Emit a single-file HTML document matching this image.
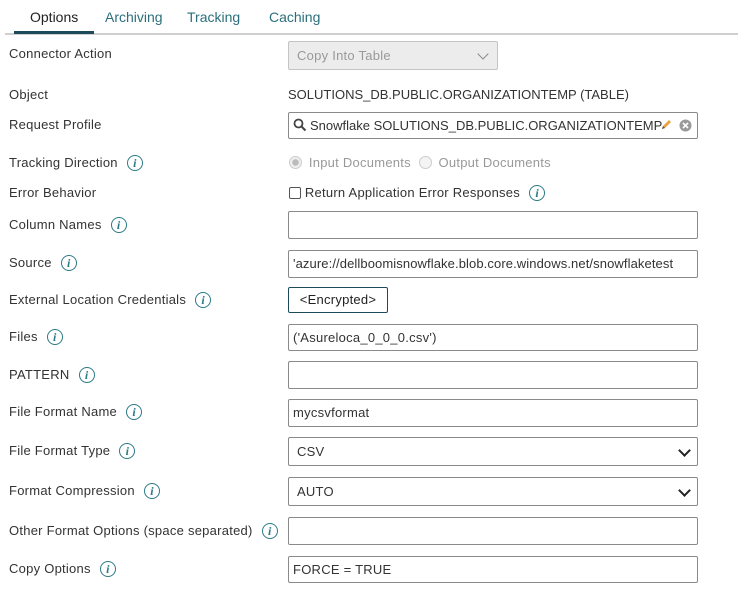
<!DOCTYPE html>
<html><head><meta charset="utf-8"><style>
body{margin:0;width:738px;height:605px;background:#fff;font-family:"Liberation Sans",sans-serif;font-size:13px;letter-spacing:0.25px;color:#333;position:relative;overflow:hidden}
.a{position:absolute;white-space:nowrap}
.lbl{position:absolute;left:9px;line-height:16px;white-space:nowrap}
.box{position:absolute;left:288px;width:410px;border:1px solid #8a8a8a;border-radius:2px;background:#fff;box-sizing:border-box;line-height:25px;padding-left:5px;white-space:nowrap;overflow:hidden}
.i{display:inline-block;width:14px;height:14px;border:1.3px solid #2b7a86;border-radius:50%;color:#2b7a86;font-family:"Liberation Serif",serif;font-style:italic;font-weight:bold;font-size:12px;line-height:14px;text-align:center;vertical-align:middle;margin-left:9px;position:relative;top:-1px;letter-spacing:0}
.chev{position:absolute;right:8px;top:8px;width:7px;height:7px;border-right:2px solid #222;border-bottom:2px solid #222;transform:rotate(45deg)}
.tab{position:absolute;top:9px;font-size:14px;color:#2b6f7c;letter-spacing:0}
</style></head><body>
<div class="tab" style="left:30px;color:#222">Options</div>
<div class="tab" style="left:105px">Archiving</div>
<div class="tab" style="left:187px">Tracking</div>
<div class="tab" style="left:269px">Caching</div>
<div class="a" style="left:5px;top:33px;width:733px;height:2px;background:#d0d0d0"></div>
<div class="a" style="left:14px;top:31px;width:80px;height:3px;background:#1d4a5a"></div>

<div class="lbl" style="top:46px">Connector Action</div>
<div class="box" style="top:41px;width:210px;height:29px;background:#ececec;border-color:#c4c4c4;color:#999;line-height:27px;padding-left:8px">Copy Into Table<div class="chev" style="border-color:#888;top:8px;right:10px;border-width:1.5px"></div></div>

<div class="lbl" style="top:87px">Object</div>
<div class="a" style="left:288px;top:87px;line-height:16px;letter-spacing:0">SOLUTIONS_DB.PUBLIC.ORGANIZATIONTEMP (TABLE)</div>

<div class="lbl" style="top:117px">Request Profile</div>
<div class="box" style="top:112px;height:27px;padding-left:4px;letter-spacing:0"><svg width="14" height="14" viewBox="0 0 14 14" style="vertical-align:middle;position:relative;top:-2px;margin-right:3px"><circle cx="5.5" cy="5.5" r="4" fill="none" stroke="#444" stroke-width="1.8"/><path d="M8.5 8.5L12.5 12.5" stroke="#444" stroke-width="2"/></svg>Snowflake SOLUTIONS_DB.PUBLIC.ORGANIZATIONTEMP
<svg width="12" height="12" viewBox="0 0 12 12" style="position:absolute;left:371px;top:6px"><path d="M2 10L3 7L9 1L11 3L5 9Z" fill="#e8a33a"/><path d="M2 10L3 7L5 9Z" fill="#555"/></svg>
<svg width="13" height="13" viewBox="0 0 13 13" style="position:absolute;left:390px;top:6px"><circle cx="6.5" cy="6.5" r="6" fill="#9a9a9a"/><path d="M4 4L9 9M9 4L4 9" stroke="#fff" stroke-width="1.6"/></svg></div>

<div class="lbl" style="top:155px">Tracking Direction<span class="i">i</span></div>
<div class="a" style="left:289px;top:155px;line-height:16px;color:#999"><span style="display:inline-block;width:13px;height:13px;border-radius:50%;border:1px solid #ccc;background:radial-gradient(#bbb 0 3px,#eee 3.5px);vertical-align:middle;position:relative;top:-1px;box-sizing:border-box;margin-right:3px"></span> Input Documents &nbsp;<span style="display:inline-block;width:13px;height:13px;border-radius:50%;border:1px solid #ccc;background:#f4f4f4;vertical-align:middle;position:relative;top:-1px;box-sizing:border-box;margin-right:3px"></span> Output Documents</div>

<div class="lbl" style="top:185px">Error Behavior</div>
<div class="a" style="left:289px;top:185px;line-height:16px"><span style="display:inline-block;width:12px;height:12px;border:1px solid #555;border-radius:2px;vertical-align:middle;position:relative;top:-1px;box-sizing:border-box"></span> Return Application Error Responses<span class="i">i</span></div>

<div class="lbl" style="top:217px">Column Names<span class="i">i</span></div>
<div class="box" style="top:211px;height:28px"></div>

<div class="lbl" style="top:255px">Source<span class="i">i</span></div>
<div class="box" style="top:250px;height:28px;padding-left:4px;letter-spacing:0.1px">'azure://dellboomisnowflake.blob.core.windows.net/snowflaketest</div>

<div class="lbl" style="top:292px">External Location Credentials<span class="i">i</span></div>
<div class="a" style="left:288px;top:287px;width:100px;height:26px;border:1px solid #1d4a5a;border-radius:2px;box-sizing:border-box;text-align:center;line-height:24px;color:#222">&lt;Encrypted&gt;</div>

<div class="lbl" style="top:329px">Files<span class="i">i</span></div>
<div class="box" style="top:324px;height:27px;padding-left:4px">('Asureloca_0_0_0.csv')</div>

<div class="lbl" style="top:367px">PATTERN<span class="i">i</span></div>
<div class="box" style="top:361px;height:28px"></div>

<div class="lbl" style="top:404px">File Format Name<span class="i">i</span></div>
<div class="box" style="top:399px;height:28px;padding-left:4px">mycsvformat</div>

<div class="lbl" style="top:443px">File Format Type<span class="i">i</span></div>
<div class="box" style="top:437px;height:29px;padding-left:8px;line-height:27px">CSV<div class="chev"></div></div>

<div class="lbl" style="top:483px">Format Compression<span class="i">i</span></div>
<div class="box" style="top:477px;height:29px;padding-left:8px;line-height:27px">AUTO<div class="chev"></div></div>

<div class="lbl" style="top:523px">Other Format Options (space separated)<span class="i">i</span></div>
<div class="box" style="top:517px;height:28px"></div>

<div class="lbl" style="top:561px">Copy Options<span class="i">i</span></div>
<div class="box" style="top:556px;height:27px;padding-left:4px">FORCE = TRUE</div>
</body></html>
